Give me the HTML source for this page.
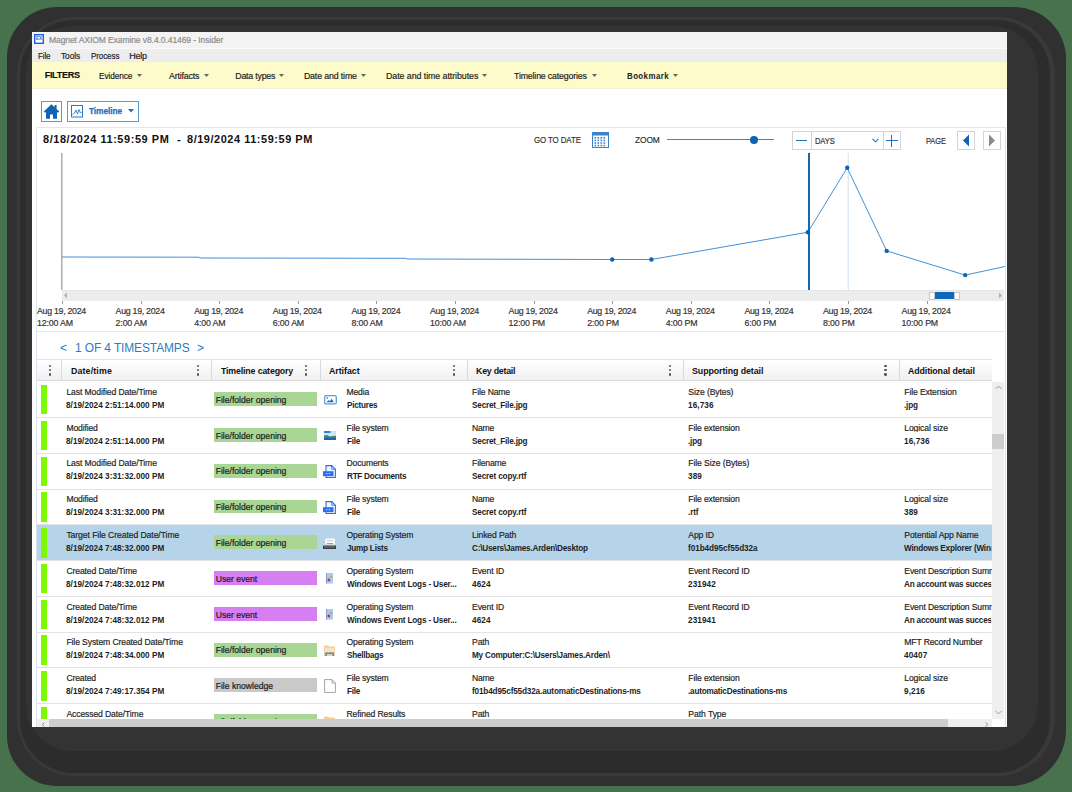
<!DOCTYPE html>
<html><head><meta charset="utf-8">
<style>
*{box-sizing:border-box;margin:0;padding:0}
html,body{width:1072px;height:792px;overflow:hidden;background:#48714d;font-family:"Liberation Sans",sans-serif;color:#1a1a1a}
.abs{position:absolute}
.t{position:absolute;white-space:pre;line-height:1}
.r{-webkit-text-stroke:0.18px currentColor}
#shadow{position:absolute;left:7px;top:7px;width:1059px;height:779px;border-radius:50px 52px 56px 50px;background:#303030}
#ring1{position:absolute;left:16.5px;top:16.5px;width:1038.5px;height:759.5px;border-radius:57px;background:#393939}
#ring2{position:absolute;left:20px;top:20px;width:1030px;height:753px;border-radius:54px;background:#2c2c2c}
#ring3{position:absolute;left:26px;top:26px;width:1012px;height:725px;border-radius:46px;background:#333}
</style></head>
<body>
<div id="shadow"></div><div id="ring1"></div><div id="ring2"></div><div id="ring3"></div>
<div style="position:absolute;left:32px;top:32px;width:975px;height:695px;overflow:hidden"><div style="position:absolute;left:-32px;top:-32px;width:1072px;height:792px">
<div class="abs" style="left:32px;top:32px;width:975px;height:695px;background:#fff;"></div>
<div class="abs" style="left:32px;top:32px;width:975px;height:16px;background:#f3f3f3;"></div>
<div class="abs" style="left:32px;top:48px;width:975px;height:14px;background:#ededed;"></div>
<div class="abs" style="left:32px;top:47.5px;width:975px;height:1px;background:#fafafa;"></div>
<svg class="abs" style="left:34px;top:34px" width="10" height="10" viewBox="0 0 10 10"><rect x="0.7" y="0.7" width="8.6" height="8.6" fill="#fff" stroke="#1a5fe0" stroke-width="1.4"/><text x="5" y="5.8" font-size="4.6" font-family="Liberation Sans" font-weight="700" text-anchor="middle" fill="#1a5fe0">EX</text></svg>
<div class="t r" style="left:48.70px;top:35.58px;font-size:9px;color:#8a8a8a;letter-spacing:-0.100px;transform:scaleX(0.948);transform-origin:0 0;">Magnet AXIOM Examine v8.4.0.41469 - Insider</div>
<div class="t r" style="left:38.40px;top:51.88px;font-size:9px;color:#222;letter-spacing:-0.100px;transform:scaleX(0.88);transform-origin:0 0;">File</div>
<div class="t r" style="left:61.30px;top:51.88px;font-size:9px;color:#222;letter-spacing:-0.100px;transform:scaleX(0.927);transform-origin:0 0;">Tools</div>
<div class="t r" style="left:90.60px;top:51.88px;font-size:9px;color:#222;letter-spacing:-0.100px;transform:scaleX(0.89);transform-origin:0 0;">Process</div>
<div class="t r" style="left:129.30px;top:51.88px;font-size:9px;color:#222;letter-spacing:-0.270px;">Help</div>
<div class="abs" style="left:32px;top:62px;width:975px;height:26px;background:#fdfbca;"></div>
<div class="abs" style="left:32px;top:88px;width:975px;height:1px;background:#f4f1d8;"></div>
<div class="t" style="left:44.70px;top:71.40px;font-size:9.1px;font-weight:700;color:#111;letter-spacing:-0.324px;transform:scaleX(1.0);transform-origin:0 0;-webkit-text-stroke:0.15px #111;">FILTERS</div>
<div class="t r" style="left:99.00px;top:72.15px;font-size:8.8px;color:#222;letter-spacing:-0.100px;transform:scaleX(0.938);transform-origin:0 0;">Evidence</div>
<svg class="abs" style="left:137.4px;top:73.9px" width="5" height="3" viewBox="0 0 5 3"><path d="M0 0H5L2.5 3Z" fill="#666"/></svg>
<div class="t r" style="left:169.00px;top:72.15px;font-size:8.8px;color:#222;letter-spacing:-0.161px;">Artifacts</div>
<svg class="abs" style="left:203.7px;top:73.9px" width="5" height="3" viewBox="0 0 5 3"><path d="M0 0H5L2.5 3Z" fill="#666"/></svg>
<div class="t r" style="left:235.30px;top:72.15px;font-size:8.8px;color:#222;letter-spacing:-0.219px;">Data types</div>
<svg class="abs" style="left:279.3px;top:73.9px" width="5" height="3" viewBox="0 0 5 3"><path d="M0 0H5L2.5 3Z" fill="#666"/></svg>
<div class="t r" style="left:303.90px;top:72.15px;font-size:8.8px;color:#222;letter-spacing:-0.141px;">Date and time</div>
<svg class="abs" style="left:361.3px;top:73.9px" width="5" height="3" viewBox="0 0 5 3"><path d="M0 0H5L2.5 3Z" fill="#666"/></svg>
<div class="t r" style="left:386.00px;top:72.15px;font-size:8.8px;color:#222;letter-spacing:-0.045px;">Date and time attributes</div>
<svg class="abs" style="left:482.4px;top:73.9px" width="5" height="3" viewBox="0 0 5 3"><path d="M0 0H5L2.5 3Z" fill="#666"/></svg>
<div class="t r" style="left:514.00px;top:72.15px;font-size:8.8px;color:#222;letter-spacing:-0.165px;">Timeline categories</div>
<svg class="abs" style="left:591.7px;top:73.9px" width="5" height="3" viewBox="0 0 5 3"><path d="M0 0H5L2.5 3Z" fill="#666"/></svg>
<div class="t" style="left:627.00px;top:72.15px;font-size:8.8px;font-weight:700;color:#222;letter-spacing:0.455px;transform:scaleX(0.9);transform-origin:0 0;">Bookmark</div>
<svg class="abs" style="left:673px;top:73.9px" width="5" height="3" viewBox="0 0 5 3"><path d="M0 0H5L2.5 3Z" fill="#666"/></svg>
<div class="abs" style="left:41px;top:101px;width:21px;height:21px;border:1px solid #5b9bd5;background:#fff"></div>
<svg class="abs" style="left:43px;top:103px" width="17" height="17" viewBox="0 0 17 17"><path d="M8.5 1.2L0.8 8.6L2 9.8L3 8.9V15.8H7V11.6H10V15.8H14V8.9L15 9.8L16.2 8.6L13.6 6.1V2H11.6V4.2Z" fill="#0e63b5"/></svg>
<div class="abs" style="left:67px;top:101px;width:72px;height:21px;border:1px solid #5b9bd5;background:#fff"></div>
<svg class="abs" style="left:71px;top:105px" width="12" height="13" viewBox="0 0 12 13"><rect x="0.5" y="0.5" width="11" height="11.5" fill="none" stroke="#2a78c8" stroke-width="1"/><path d="M1.5 9.5L3.5 8L5 5L6.5 9L8 4.5L9.5 8L10.5 7" fill="none" stroke="#2a78c8" stroke-width="0.9"/></svg>
<div class="t" style="left:89.30px;top:105.87px;font-size:9.6px;font-weight:700;color:#1b6ec2;letter-spacing:-0.100px;transform:scaleX(0.872);transform-origin:0 0;-webkit-text-stroke:0.25px #1b6ec2;">Timeline</div>
<svg class="abs" style="left:128.3px;top:108.8px" width="6" height="4" viewBox="0 0 6 4"><path d="M0 0H6L3 3.6Z" fill="#1b6ec2"/></svg>
<div class="abs" style="left:35.5px;top:127px;width:969.5px;height:1px;background:#e3e8ee;"></div>
<div class="abs" style="left:35.5px;top:127px;width:1px;height:204px;background:#e3e8ee;"></div>
<div class="t" style="left:43.10px;top:133.67px;font-size:11.5px;font-weight:700;color:#111;letter-spacing:0.611px;transform:scaleX(0.95);transform-origin:0 0;">8/18/2024 11:59:59 PM</div>
<div class="t" style="left:177.00px;top:133.67px;font-size:11.5px;font-weight:700;color:#111;">-</div>
<div class="t" style="left:187.00px;top:133.67px;font-size:11.5px;font-weight:700;color:#111;letter-spacing:0.585px;transform:scaleX(0.95);transform-origin:0 0;">8/19/2024 11:59:59 PM</div>
<div class="t r" style="left:534.00px;top:136.14px;font-size:8.7px;color:#333;letter-spacing:-0.100px;transform:scaleX(0.907);transform-origin:0 0;">GO TO DATE</div>
<svg class="abs" style="left:592px;top:132px" width="17" height="16" viewBox="0 0 17 16"><rect x="0.5" y="0.5" width="16" height="15" fill="#fff" stroke="#3b82c9"/><rect x="0.5" y="0.5" width="16" height="3" fill="#3b82c9"/><rect x="2.5" y="5.0" width="1.6" height="1.6" fill="#3b82c9"/><rect x="5.5" y="5.0" width="1.6" height="1.6" fill="#3b82c9"/><rect x="8.5" y="5.0" width="1.6" height="1.6" fill="#3b82c9"/><rect x="11.5" y="5.0" width="1.6" height="1.6" fill="#3b82c9"/><rect x="2.5" y="7.6" width="1.6" height="1.6" fill="#3b82c9"/><rect x="5.5" y="7.6" width="1.6" height="1.6" fill="#3b82c9"/><rect x="8.5" y="7.6" width="1.6" height="1.6" fill="#3b82c9"/><rect x="11.5" y="7.6" width="1.6" height="1.6" fill="#3b82c9"/><rect x="2.5" y="10.2" width="1.6" height="1.6" fill="#3b82c9"/><rect x="5.5" y="10.2" width="1.6" height="1.6" fill="#3b82c9"/><rect x="8.5" y="10.2" width="1.6" height="1.6" fill="#3b82c9"/><rect x="11.5" y="10.2" width="1.6" height="1.6" fill="#3b82c9"/><rect x="2.5" y="12.8" width="1.6" height="1.6" fill="#3b82c9"/><rect x="5.5" y="12.8" width="1.6" height="1.6" fill="#3b82c9"/><rect x="8.5" y="12.8" width="1.6" height="1.6" fill="#3b82c9"/><rect x="11.5" y="12.8" width="1.6" height="1.6" fill="#3b82c9"/></svg>
<div class="t r" style="left:634.50px;top:136.14px;font-size:8.7px;color:#333;letter-spacing:-0.100px;transform:scaleX(0.961);transform-origin:0 0;">ZOOM</div>
<div class="abs" style="left:667px;top:139px;width:107px;height:1.3px;background:#777;"></div>
<div class="abs" style="left:750px;top:135.5px;width:8px;height:8px;border-radius:50%;background:#0e63b5"></div>
<div class="abs" style="left:792px;top:131px;width:109px;height:19px;border:1px solid #d4d4d4;background:#fff"></div>
<div class="abs" style="left:810.5px;top:131px;width:1px;height:19px;background:#d4d4d4;"></div>
<div class="abs" style="left:882.5px;top:131px;width:1px;height:19px;background:#d4d4d4;"></div>
<div class="abs" style="left:796px;top:140px;width:11px;height:1.3px;background:#1b6ec2;"></div>
<div class="abs" style="left:885.5px;top:140px;width:12px;height:1.3px;background:#1b6ec2;"></div>
<div class="abs" style="left:891px;top:134.5px;width:1.3px;height:12px;background:#1b6ec2;"></div>
<div class="t r" style="left:814.80px;top:136.64px;font-size:8.7px;color:#333;letter-spacing:-0.100px;transform:scaleX(0.87);transform-origin:0 0;">DAYS</div>
<svg class="abs" style="left:872px;top:138px" width="7" height="5" viewBox="0 0 7 5"><path d="M0.5 0.8L3.5 3.8L6.5 0.8" fill="none" stroke="#2a6fb8" stroke-width="1.1"/></svg>
<div class="t r" style="left:926.00px;top:136.64px;font-size:8.7px;color:#333;letter-spacing:-0.100px;transform:scaleX(0.857);transform-origin:0 0;">PAGE</div>
<div class="abs" style="left:957px;top:131px;width:18px;height:19px;border:1px solid #d4d4d4;background:#fff"></div>
<svg class="abs" style="left:962px;top:134px" width="8" height="13" viewBox="0 0 8 13"><path d="M7 0.5V12.5L1 6.5Z" fill="#0e63b5"/></svg>
<div class="abs" style="left:983px;top:131px;width:18px;height:19px;border:1px solid #d4d4d4;background:#fff"></div>
<svg class="abs" style="left:988px;top:134px" width="8" height="13" viewBox="0 0 8 13"><path d="M1 0.5V12.5L7 6.5Z" fill="#8a8a8a"/></svg>
<svg class="abs" style="left:0;top:0" width="1072" height="792" viewBox="0 0 1072 792"><rect x="61.2" y="153" width="1.2" height="137" fill="#9a9a9a"/><rect x="847.7" y="153" width="1" height="137" fill="#cfe0f0"/><polyline points="62,257 199,257.2 200,258 406,258.3 407,259 612.2,259.5 651.4,259.5 807.9,232.2 847.2,167.8 886.7,250.9 965.2,275.1 1004.9,266.5" fill="none" stroke="#4391d6" stroke-width="1"/><rect x="808" y="153" width="2" height="137" fill="#1767b0"/><circle cx="612.2" cy="259.5" r="2.2" fill="#0e63b5"/><circle cx="651.4" cy="259.5" r="2.2" fill="#0e63b5"/><circle cx="807.9" cy="232.2" r="2.2" fill="#0e63b5"/><circle cx="847.2" cy="167.8" r="2.2" fill="#0e63b5"/><circle cx="886.7" cy="250.9" r="2.2" fill="#0e63b5"/><circle cx="965.2" cy="275.1" r="2.2" fill="#0e63b5"/></svg>
<div class="abs" style="left:61.7px;top:290px;width:942.5px;height:10.5px;background:#ececec;border-top:1px solid #e0e6ec"></div>
<svg class="abs" style="left:63px;top:292px" width="5" height="7" viewBox="0 0 5 7"><path d="M4 0.5V6.5L1 3.5Z" fill="#b0b0b0"/></svg>
<svg class="abs" style="left:998px;top:292px" width="5" height="7" viewBox="0 0 5 7"><path d="M1 0.5V6.5L4 3.5Z" fill="#b0b0b0"/></svg>
<div class="abs" style="left:929px;top:291.5px;width:6px;height:8px;border:1px solid #c8c8c8;background:#fff"></div>
<div class="abs" style="left:934.8px;top:292px;width:19.2px;height:7px;background:#0e6ab8;"></div>
<div class="abs" style="left:954px;top:291.5px;width:6px;height:8px;border:1px solid #c8c8c8;background:#fff"></div>
<div class="abs" style="left:62.0px;top:301px;width:1px;height:3px;background:#999;"></div>
<div class="t r" style="left:37.00px;top:307.05px;font-size:8.8px;color:#333;letter-spacing:-0.287px;">Aug 19, 2024</div>
<div class="t r" style="left:37.00px;top:318.85px;font-size:8.8px;color:#333;letter-spacing:-0.150px;">12:00 AM</div>
<div class="abs" style="left:140.6px;top:301px;width:1px;height:3px;background:#999;"></div>
<div class="t r" style="left:115.60px;top:307.05px;font-size:8.8px;color:#333;letter-spacing:-0.287px;">Aug 19, 2024</div>
<div class="t r" style="left:115.60px;top:318.85px;font-size:8.8px;color:#333;letter-spacing:-0.150px;">2:00 AM</div>
<div class="abs" style="left:219.2px;top:301px;width:1px;height:3px;background:#999;"></div>
<div class="t r" style="left:194.20px;top:307.05px;font-size:8.8px;color:#333;letter-spacing:-0.287px;">Aug 19, 2024</div>
<div class="t r" style="left:194.20px;top:318.85px;font-size:8.8px;color:#333;letter-spacing:-0.150px;">4:00 AM</div>
<div class="abs" style="left:297.79999999999995px;top:301px;width:1px;height:3px;background:#999;"></div>
<div class="t r" style="left:272.80px;top:307.05px;font-size:8.8px;color:#333;letter-spacing:-0.287px;">Aug 19, 2024</div>
<div class="t r" style="left:272.80px;top:318.85px;font-size:8.8px;color:#333;letter-spacing:-0.150px;">6:00 AM</div>
<div class="abs" style="left:376.4px;top:301px;width:1px;height:3px;background:#999;"></div>
<div class="t r" style="left:351.40px;top:307.05px;font-size:8.8px;color:#333;letter-spacing:-0.287px;">Aug 19, 2024</div>
<div class="t r" style="left:351.40px;top:318.85px;font-size:8.8px;color:#333;letter-spacing:-0.150px;">8:00 AM</div>
<div class="abs" style="left:455.0px;top:301px;width:1px;height:3px;background:#999;"></div>
<div class="t r" style="left:430.00px;top:307.05px;font-size:8.8px;color:#333;letter-spacing:-0.287px;">Aug 19, 2024</div>
<div class="t r" style="left:430.00px;top:318.85px;font-size:8.8px;color:#333;letter-spacing:-0.150px;">10:00 AM</div>
<div class="abs" style="left:533.5999999999999px;top:301px;width:1px;height:3px;background:#999;"></div>
<div class="t r" style="left:508.60px;top:307.05px;font-size:8.8px;color:#333;letter-spacing:-0.287px;">Aug 19, 2024</div>
<div class="t r" style="left:508.60px;top:318.85px;font-size:8.8px;color:#333;letter-spacing:-0.150px;">12:00 PM</div>
<div class="abs" style="left:612.1999999999999px;top:301px;width:1px;height:3px;background:#999;"></div>
<div class="t r" style="left:587.20px;top:307.05px;font-size:8.8px;color:#333;letter-spacing:-0.287px;">Aug 19, 2024</div>
<div class="t r" style="left:587.20px;top:318.85px;font-size:8.8px;color:#333;letter-spacing:-0.150px;">2:00 PM</div>
<div class="abs" style="left:690.8px;top:301px;width:1px;height:3px;background:#999;"></div>
<div class="t r" style="left:665.80px;top:307.05px;font-size:8.8px;color:#333;letter-spacing:-0.287px;">Aug 19, 2024</div>
<div class="t r" style="left:665.80px;top:318.85px;font-size:8.8px;color:#333;letter-spacing:-0.150px;">4:00 PM</div>
<div class="abs" style="left:769.4px;top:301px;width:1px;height:3px;background:#999;"></div>
<div class="t r" style="left:744.40px;top:307.05px;font-size:8.8px;color:#333;letter-spacing:-0.287px;">Aug 19, 2024</div>
<div class="t r" style="left:744.40px;top:318.85px;font-size:8.8px;color:#333;letter-spacing:-0.150px;">6:00 PM</div>
<div class="abs" style="left:848.0px;top:301px;width:1px;height:3px;background:#999;"></div>
<div class="t r" style="left:823.00px;top:307.05px;font-size:8.8px;color:#333;letter-spacing:-0.287px;">Aug 19, 2024</div>
<div class="t r" style="left:823.00px;top:318.85px;font-size:8.8px;color:#333;letter-spacing:-0.150px;">8:00 PM</div>
<div class="abs" style="left:926.5999999999999px;top:301px;width:1px;height:3px;background:#999;"></div>
<div class="t r" style="left:901.60px;top:307.05px;font-size:8.8px;color:#333;letter-spacing:-0.287px;">Aug 19, 2024</div>
<div class="t r" style="left:901.60px;top:318.85px;font-size:8.8px;color:#333;letter-spacing:-0.150px;">10:00 PM</div>
<div class="abs" style="left:36px;top:330.5px;width:968.5px;height:1px;background:#e3e8ee;"></div>
<div class="t r" style="left:59.90px;top:341.84px;font-size:12px;color:#2b7cc4;-webkit-text-stroke:0;">&lt;</div>
<div class="t r" style="left:74.80px;top:341.59px;font-size:12.3px;color:#2b7cc4;letter-spacing:-0.100px;transform:scaleX(0.97);transform-origin:0 0;-webkit-text-stroke:0;">1 OF 4 TIMESTAMPS</div>
<div class="t r" style="left:197.00px;top:341.84px;font-size:12px;color:#2b7cc4;-webkit-text-stroke:0;">&gt;</div>
<div class="abs" style="left:37px;top:359.2px;width:955px;height:22.3px;background:linear-gradient(#ffffff,#f0f0f0);border-top:1px solid #e4e4e4;border-bottom:1px solid #dcdcdc"></div>
<div class="abs" style="left:61.3px;top:360px;width:1px;height:21px;background:#dadada;"></div>
<div class="abs" style="left:211.2px;top:360px;width:1px;height:21px;background:#dadada;"></div>
<div class="abs" style="left:319.6px;top:360px;width:1px;height:21px;background:#dadada;"></div>
<div class="abs" style="left:466.6px;top:360px;width:1px;height:21px;background:#dadada;"></div>
<div class="abs" style="left:682.5px;top:360px;width:1px;height:21px;background:#dadada;"></div>
<div class="abs" style="left:898.6px;top:360px;width:1px;height:21px;background:#dadada;"></div>
<div class="abs" style="left:48.95px;top:364.55px;width:2.3px;height:2.3px;border-radius:50%;background:#555"></div>
<div class="abs" style="left:48.95px;top:368.95px;width:2.3px;height:2.3px;border-radius:50%;background:#555"></div>
<div class="abs" style="left:48.95px;top:373.35px;width:2.3px;height:2.3px;border-radius:50%;background:#555"></div>
<div class="abs" style="left:197.15px;top:364.55px;width:2.3px;height:2.3px;border-radius:50%;background:#555"></div>
<div class="abs" style="left:197.15px;top:368.95px;width:2.3px;height:2.3px;border-radius:50%;background:#555"></div>
<div class="abs" style="left:197.15px;top:373.35px;width:2.3px;height:2.3px;border-radius:50%;background:#555"></div>
<div class="abs" style="left:305.15px;top:364.55px;width:2.3px;height:2.3px;border-radius:50%;background:#555"></div>
<div class="abs" style="left:305.15px;top:368.95px;width:2.3px;height:2.3px;border-radius:50%;background:#555"></div>
<div class="abs" style="left:305.15px;top:373.35px;width:2.3px;height:2.3px;border-radius:50%;background:#555"></div>
<div class="abs" style="left:452.55px;top:364.55px;width:2.3px;height:2.3px;border-radius:50%;background:#555"></div>
<div class="abs" style="left:452.55px;top:368.95px;width:2.3px;height:2.3px;border-radius:50%;background:#555"></div>
<div class="abs" style="left:452.55px;top:373.35px;width:2.3px;height:2.3px;border-radius:50%;background:#555"></div>
<div class="abs" style="left:668.85px;top:364.55px;width:2.3px;height:2.3px;border-radius:50%;background:#555"></div>
<div class="abs" style="left:668.85px;top:368.95px;width:2.3px;height:2.3px;border-radius:50%;background:#555"></div>
<div class="abs" style="left:668.85px;top:373.35px;width:2.3px;height:2.3px;border-radius:50%;background:#555"></div>
<div class="abs" style="left:884.35px;top:364.55px;width:2.3px;height:2.3px;border-radius:50%;background:#555"></div>
<div class="abs" style="left:884.35px;top:368.95px;width:2.3px;height:2.3px;border-radius:50%;background:#555"></div>
<div class="abs" style="left:884.35px;top:373.35px;width:2.3px;height:2.3px;border-radius:50%;background:#555"></div>
<div class="t" style="left:70.70px;top:366.30px;font-size:9.8px;font-weight:700;color:#111;letter-spacing:0.152px;transform:scaleX(0.9);transform-origin:0 0;">Date/time</div>
<div class="t" style="left:220.90px;top:366.30px;font-size:9.8px;font-weight:700;color:#111;letter-spacing:-0.176px;transform:scaleX(0.9);transform-origin:0 0;">Timeline category</div>
<div class="t" style="left:328.70px;top:366.30px;font-size:9.8px;font-weight:700;color:#111;letter-spacing:-0.044px;transform:scaleX(0.9);transform-origin:0 0;">Artifact</div>
<div class="t" style="left:476.40px;top:366.30px;font-size:9.8px;font-weight:700;color:#111;letter-spacing:-0.268px;transform:scaleX(0.9);transform-origin:0 0;">Key detail</div>
<div class="t" style="left:691.70px;top:366.30px;font-size:9.8px;font-weight:700;color:#111;letter-spacing:-0.078px;transform:scaleX(0.9);transform-origin:0 0;">Supporting detail</div>
<div class="t" style="left:908.30px;top:366.30px;font-size:9.8px;font-weight:700;color:#111;letter-spacing:-0.118px;transform:scaleX(0.9);transform-origin:0 0;">Additional detail</div>
<div class="abs" style="left:37px;top:416.97999999999996px;width:955px;height:1px;background:#e3e3e3;"></div>
<div class="abs" style="left:40.5px;top:385.0px;width:6.8px;height:29.4px;background:#7cfa00;"></div>
<div class="t r" style="left:66.40px;top:387.92px;font-size:8.6px;color:#1e1e1e;letter-spacing:-0.103px;">Last Modified Date/Time</div>
<div class="t" style="left:66.40px;top:400.90px;font-size:9.1px;font-weight:700;color:#1e1e1e;letter-spacing:0.044px;transform:scaleX(0.9);transform-origin:0 0;">8/19/2024 2:51:14.000 PM</div>
<div class="abs" style="left:213.9px;top:392.2px;width:102.8px;height:13.9px;background:#a9d595;"></div>
<div class="t r" style="left:215.70px;top:395.82px;font-size:8.6px;">File/folder opening</div>
<svg class="abs" style="left:323.5px;top:395.00px" width="13" height="9.5" viewBox="0 0 13 9.5"><rect x="0.7" y="0.7" width="11.6" height="8.1" rx="1.3" fill="#fff" stroke="#5a9ed8" stroke-width="1.3"/><path d="M2.5 7.3L4.5 5L5.8 6.2L7.5 3.8L10 7.3Z" fill="#1e6fc4"/><ellipse cx="3.3" cy="3" rx="0.9" ry="0.7" fill="#1e6fc4"/></svg>
<div class="t r" style="left:346.50px;top:387.92px;font-size:8.6px;color:#1e1e1e;letter-spacing:-0.176px;">Media</div>
<div class="t" style="left:346.50px;top:400.90px;font-size:9.1px;font-weight:700;color:#1e1e1e;letter-spacing:-0.282px;transform:scaleX(0.9);transform-origin:0 0;">Pictures</div>
<div class="t r" style="left:472.10px;top:387.92px;font-size:8.6px;color:#1e1e1e;letter-spacing:-0.138px;">File Name</div>
<div class="t" style="left:472.10px;top:400.90px;font-size:9.1px;font-weight:700;color:#1e1e1e;letter-spacing:-0.214px;transform:scaleX(0.9);transform-origin:0 0;">Secret_File.jpg</div>
<div class="t r" style="left:688.30px;top:387.92px;font-size:8.6px;color:#1e1e1e;letter-spacing:-0.104px;">Size (Bytes)</div>
<div class="t" style="left:688.30px;top:400.90px;font-size:9.1px;font-weight:700;color:#1e1e1e;letter-spacing:0.103px;transform:scaleX(0.9);transform-origin:0 0;">16,736</div>
<div class="t r" style="width:87.7px;overflow:hidden;left:904.30px;top:387.92px;font-size:8.6px;color:#1e1e1e;letter-spacing:-0.119px;">File Extension</div>
<div class="t" style="width:97.4px;overflow:hidden;left:904.30px;top:400.90px;font-size:9.1px;font-weight:700;color:#1e1e1e;letter-spacing:-0.234px;transform:scaleX(0.9);transform-origin:0 0;">.jpg</div>
<div class="abs" style="left:37px;top:452.75999999999993px;width:955px;height:1px;background:#e3e3e3;"></div>
<div class="abs" style="left:40.5px;top:420.78px;width:6.8px;height:29.4px;background:#7cfa00;"></div>
<div class="t r" style="left:66.40px;top:423.70px;font-size:8.6px;color:#1e1e1e;letter-spacing:-0.139px;">Modified</div>
<div class="t" style="left:66.40px;top:436.68px;font-size:9.1px;font-weight:700;color:#1e1e1e;letter-spacing:0.044px;transform:scaleX(0.9);transform-origin:0 0;">8/19/2024 2:51:14.000 PM</div>
<div class="abs" style="left:213.9px;top:427.97999999999996px;width:102.8px;height:13.9px;background:#a9d595;"></div>
<div class="t r" style="left:215.70px;top:431.60px;font-size:8.6px;">File/folder opening</div>
<svg class="abs" style="left:323.8px;top:430.78px" width="12" height="9.3" viewBox="0 0 12 9.3"><rect x="0" y="0" width="12" height="9.3" fill="#cfe6f8"/><rect x="0" y="0" width="6.5" height="2" fill="#2f86e0"/><path d="M0 4.5L3 4L6 5.5L9 5L12 4.8V9.3H0Z" fill="#3f8a6a"/><rect x="0" y="6.8" width="12" height="2.5" fill="#2a5fa8"/></svg>
<div class="t r" style="left:346.50px;top:423.70px;font-size:8.6px;color:#1e1e1e;letter-spacing:-0.123px;">File system</div>
<div class="t" style="left:346.50px;top:436.68px;font-size:9.1px;font-weight:700;color:#1e1e1e;letter-spacing:-0.287px;transform:scaleX(0.9);transform-origin:0 0;">File</div>
<div class="t r" style="left:472.10px;top:423.70px;font-size:8.6px;color:#1e1e1e;letter-spacing:-0.229px;">Name</div>
<div class="t" style="left:472.10px;top:436.68px;font-size:9.1px;font-weight:700;color:#1e1e1e;letter-spacing:-0.214px;transform:scaleX(0.9);transform-origin:0 0;">Secret_File.jpg</div>
<div class="t r" style="left:688.30px;top:423.70px;font-size:8.6px;color:#1e1e1e;letter-spacing:-0.117px;">File extension</div>
<div class="t" style="left:688.30px;top:436.68px;font-size:9.1px;font-weight:700;color:#1e1e1e;letter-spacing:-0.234px;transform:scaleX(0.9);transform-origin:0 0;">.jpg</div>
<div class="t r" style="width:87.7px;overflow:hidden;left:904.30px;top:423.70px;font-size:8.6px;color:#1e1e1e;letter-spacing:-0.116px;">Logical size</div>
<div class="t" style="width:97.4px;overflow:hidden;left:904.30px;top:436.68px;font-size:9.1px;font-weight:700;color:#1e1e1e;letter-spacing:0.103px;transform:scaleX(0.9);transform-origin:0 0;">16,736</div>
<div class="abs" style="left:37px;top:488.54px;width:955px;height:1px;background:#e3e3e3;"></div>
<div class="abs" style="left:40.5px;top:456.56px;width:6.8px;height:29.4px;background:#7cfa00;"></div>
<div class="t r" style="left:66.40px;top:459.48px;font-size:8.6px;color:#1e1e1e;letter-spacing:-0.103px;">Last Modified Date/Time</div>
<div class="t" style="left:66.40px;top:472.46px;font-size:9.1px;font-weight:700;color:#1e1e1e;letter-spacing:0.044px;transform:scaleX(0.9);transform-origin:0 0;">8/19/2024 3:31:32.000 PM</div>
<div class="abs" style="left:213.9px;top:463.76px;width:102.8px;height:13.9px;background:#a9d595;"></div>
<div class="t r" style="left:215.70px;top:467.38px;font-size:8.6px;">File/folder opening</div>
<svg class="abs" style="left:323.2px;top:464.76px" width="13" height="13.2" viewBox="0 0 13 13.2"><path d="M3 0.6H8.8L12.4 4.2V12.6H3Z" fill="#f4f8fe" stroke="#2a6ef0" stroke-width="1.1"/><path d="M8.8 0.6V4.2H12.4" fill="none" stroke="#2a6ef0" stroke-width="1"/><rect x="0" y="6.2" width="10.5" height="5" fill="#2b6ef2"/><rect x="3.2" y="8" width="1.2" height="1.2" fill="#cfe0ff"/><rect x="5.8" y="8" width="1.2" height="1.2" fill="#cfe0ff"/></svg>
<div class="t r" style="left:346.50px;top:459.48px;font-size:8.6px;color:#1e1e1e;letter-spacing:-0.163px;">Documents</div>
<div class="t" style="left:346.50px;top:472.46px;font-size:9.1px;font-weight:700;color:#1e1e1e;letter-spacing:-0.304px;transform:scaleX(0.9);transform-origin:0 0;">RTF Documents</div>
<div class="t r" style="left:472.10px;top:459.48px;font-size:8.6px;color:#1e1e1e;letter-spacing:-0.152px;">Filename</div>
<div class="t" style="left:472.10px;top:472.46px;font-size:9.1px;font-weight:700;color:#1e1e1e;letter-spacing:-0.175px;transform:scaleX(0.9);transform-origin:0 0;">Secret copy.rtf</div>
<div class="t r" style="left:688.30px;top:459.48px;font-size:8.6px;color:#1e1e1e;letter-spacing:-0.098px;">File Size (Bytes)</div>
<div class="t" style="left:688.30px;top:472.46px;font-size:9.1px;font-weight:700;color:#1e1e1e;letter-spacing:0.141px;transform:scaleX(0.9);transform-origin:0 0;">389</div>
<div class="abs" style="left:37px;top:524.32px;width:955px;height:1px;background:#e3e3e3;"></div>
<div class="abs" style="left:40.5px;top:492.34000000000003px;width:6.8px;height:29.4px;background:#7cfa00;"></div>
<div class="t r" style="left:66.40px;top:495.26px;font-size:8.6px;color:#1e1e1e;letter-spacing:-0.139px;">Modified</div>
<div class="t" style="left:66.40px;top:508.24px;font-size:9.1px;font-weight:700;color:#1e1e1e;letter-spacing:0.044px;transform:scaleX(0.9);transform-origin:0 0;">8/19/2024 3:31:32.000 PM</div>
<div class="abs" style="left:213.9px;top:499.54px;width:102.8px;height:13.9px;background:#a9d595;"></div>
<div class="t r" style="left:215.70px;top:503.16px;font-size:8.6px;">File/folder opening</div>
<svg class="abs" style="left:323.2px;top:500.54px" width="13" height="13.2" viewBox="0 0 13 13.2"><path d="M3 0.6H8.8L12.4 4.2V12.6H3Z" fill="#f4f8fe" stroke="#2a6ef0" stroke-width="1.1"/><path d="M8.8 0.6V4.2H12.4" fill="none" stroke="#2a6ef0" stroke-width="1"/><rect x="0" y="6.2" width="10.5" height="5" fill="#2b6ef2"/><rect x="3.2" y="8" width="1.2" height="1.2" fill="#cfe0ff"/><rect x="5.8" y="8" width="1.2" height="1.2" fill="#cfe0ff"/></svg>
<div class="t r" style="left:346.50px;top:495.26px;font-size:8.6px;color:#1e1e1e;letter-spacing:-0.123px;">File system</div>
<div class="t" style="left:346.50px;top:508.24px;font-size:9.1px;font-weight:700;color:#1e1e1e;letter-spacing:-0.287px;transform:scaleX(0.9);transform-origin:0 0;">File</div>
<div class="t r" style="left:472.10px;top:495.26px;font-size:8.6px;color:#1e1e1e;letter-spacing:-0.229px;">Name</div>
<div class="t" style="left:472.10px;top:508.24px;font-size:9.1px;font-weight:700;color:#1e1e1e;letter-spacing:-0.175px;transform:scaleX(0.9);transform-origin:0 0;">Secret copy.rtf</div>
<div class="t r" style="left:688.30px;top:495.26px;font-size:8.6px;color:#1e1e1e;letter-spacing:-0.117px;">File extension</div>
<div class="t" style="left:688.30px;top:508.24px;font-size:9.1px;font-weight:700;color:#1e1e1e;letter-spacing:-0.160px;transform:scaleX(0.9);transform-origin:0 0;">.rtf</div>
<div class="t r" style="width:87.7px;overflow:hidden;left:904.30px;top:495.26px;font-size:8.6px;color:#1e1e1e;letter-spacing:-0.116px;">Logical size</div>
<div class="t" style="width:97.4px;overflow:hidden;left:904.30px;top:508.24px;font-size:9.1px;font-weight:700;color:#1e1e1e;letter-spacing:0.141px;transform:scaleX(0.9);transform-origin:0 0;">389</div>
<div class="abs" style="left:37px;top:525.02px;width:955px;height:35.58px;background:#b5d3e9;"></div>
<div class="abs" style="left:37px;top:560.1px;width:955px;height:1px;background:#e3e3e3;"></div>
<div class="abs" style="left:40.5px;top:528.12px;width:6.8px;height:29.4px;background:#7cfa00;"></div>
<div class="t r" style="left:66.40px;top:531.04px;font-size:8.6px;color:#1e1e1e;letter-spacing:-0.069px;">Target File Created Date/Time</div>
<div class="t" style="left:66.40px;top:544.02px;font-size:9.1px;font-weight:700;color:#1e1e1e;letter-spacing:0.044px;transform:scaleX(0.9);transform-origin:0 0;">8/19/2024 7:48:32.000 PM</div>
<div class="abs" style="left:213.9px;top:535.32px;width:102.8px;height:13.9px;background:#a9d595;"></div>
<div class="t r" style="left:215.70px;top:538.94px;font-size:8.6px;">File/folder opening</div>
<svg class="abs" style="left:323px;top:538.12px" width="13.2" height="11.7" viewBox="0 0 13.2 11.7"><rect x="2" y="0.3" width="10" height="6.5" fill="#fbfbfb" stroke="#c9d6e2" stroke-width="0.5"/><rect x="4" y="2.2" width="6" height="1" fill="#c8c8c8"/><rect x="4" y="5.2" width="6" height="0.9" fill="#4d9be0"/><rect x="0" y="7.6" width="13.2" height="3.4" fill="#3a3a40"/><rect x="1" y="8.3" width="11" height="1.6" fill="#6a6a58"/></svg>
<div class="t r" style="left:346.50px;top:531.04px;font-size:8.6px;color:#1e1e1e;letter-spacing:-0.133px;">Operating System</div>
<div class="t" style="left:346.50px;top:544.02px;font-size:9.1px;font-weight:700;color:#1e1e1e;letter-spacing:-0.273px;transform:scaleX(0.9);transform-origin:0 0;">Jump Lists</div>
<div class="t r" style="left:472.10px;top:531.04px;font-size:8.6px;color:#1e1e1e;letter-spacing:-0.129px;">Linked Path</div>
<div class="t" style="left:472.10px;top:544.02px;font-size:9.1px;font-weight:700;color:#1e1e1e;letter-spacing:-0.240px;transform:scaleX(0.9);transform-origin:0 0;">C:\Users\James.Arden\Desktop</div>
<div class="t r" style="left:688.30px;top:531.04px;font-size:8.6px;color:#1e1e1e;letter-spacing:-0.143px;">App ID</div>
<div class="t" style="left:688.30px;top:544.02px;font-size:9.1px;font-weight:700;color:#1e1e1e;letter-spacing:-0.064px;transform:scaleX(0.9);transform-origin:0 0;">f01b4d95cf55d32a</div>
<div class="t r" style="width:87.7px;overflow:hidden;left:904.30px;top:531.04px;font-size:8.6px;color:#1e1e1e;letter-spacing:-0.099px;">Potential App Name</div>
<div class="t" style="width:97.4px;overflow:hidden;left:904.30px;top:544.02px;font-size:9.1px;font-weight:700;color:#1e1e1e;letter-spacing:-0.242px;transform:scaleX(0.9);transform-origin:0 0;">Windows Explorer (Windows)</div>
<div class="abs" style="left:37px;top:595.88px;width:955px;height:1px;background:#e3e3e3;"></div>
<div class="abs" style="left:40.5px;top:563.9px;width:6.8px;height:29.4px;background:#7cfa00;"></div>
<div class="t r" style="left:66.40px;top:566.82px;font-size:8.6px;color:#1e1e1e;letter-spacing:-0.107px;">Created Date/Time</div>
<div class="t" style="left:66.40px;top:579.80px;font-size:9.1px;font-weight:700;color:#1e1e1e;letter-spacing:0.044px;transform:scaleX(0.9);transform-origin:0 0;">8/19/2024 7:48:32.012 PM</div>
<div class="abs" style="left:213.9px;top:571.1px;width:102.8px;height:13.9px;background:#d77ef0;"></div>
<div class="t r" style="left:215.70px;top:574.72px;font-size:8.6px;">User event</div>
<svg class="abs" style="left:326px;top:573.20px" width="7.2" height="10.6" viewBox="0 0 7.2 10.6"><rect x="0" y="0" width="7.2" height="10.6" fill="#a9cbf0"/><rect x="0" y="0" width="1" height="10.6" fill="#7f9fd6"/><path d="M4.8 2.5L6.5 4L5.2 5.5L3.8 4Z" fill="#e0953a"/><path d="M2.5 5.2L4.5 7L3 8.8L1.2 7Z" fill="#b0304a"/></svg>
<div class="t r" style="left:346.50px;top:566.82px;font-size:8.6px;color:#1e1e1e;letter-spacing:-0.133px;">Operating System</div>
<div class="t" style="left:346.50px;top:579.80px;font-size:9.1px;font-weight:700;color:#1e1e1e;letter-spacing:-0.181px;transform:scaleX(0.9);transform-origin:0 0;">Windows Event Logs - User...</div>
<div class="t r" style="left:472.10px;top:566.82px;font-size:8.6px;color:#1e1e1e;letter-spacing:-0.131px;">Event ID</div>
<div class="t" style="left:472.10px;top:579.80px;font-size:9.1px;font-weight:700;color:#1e1e1e;letter-spacing:0.125px;transform:scaleX(0.9);transform-origin:0 0;">4624</div>
<div class="t r" style="left:688.30px;top:566.82px;font-size:8.6px;color:#1e1e1e;letter-spacing:-0.125px;">Event Record ID</div>
<div class="t" style="left:688.30px;top:579.80px;font-size:9.1px;font-weight:700;color:#1e1e1e;letter-spacing:0.113px;transform:scaleX(0.9);transform-origin:0 0;">231942</div>
<div class="t r" style="width:87.7px;overflow:hidden;left:904.30px;top:566.82px;font-size:8.6px;color:#1e1e1e;letter-spacing:-0.127px;">Event Description Summary</div>
<div class="t" style="width:97.4px;overflow:hidden;left:904.30px;top:579.80px;font-size:9.1px;font-weight:700;color:#1e1e1e;letter-spacing:-0.237px;transform:scaleX(0.9);transform-origin:0 0;">An account was successfully logged on</div>
<div class="abs" style="left:37px;top:631.6600000000001px;width:955px;height:1px;background:#e3e3e3;"></div>
<div class="abs" style="left:40.5px;top:599.6800000000001px;width:6.8px;height:29.4px;background:#7cfa00;"></div>
<div class="t r" style="left:66.40px;top:602.60px;font-size:8.6px;color:#1e1e1e;letter-spacing:-0.107px;">Created Date/Time</div>
<div class="t" style="left:66.40px;top:615.58px;font-size:9.1px;font-weight:700;color:#1e1e1e;letter-spacing:0.044px;transform:scaleX(0.9);transform-origin:0 0;">8/19/2024 7:48:32.012 PM</div>
<div class="abs" style="left:213.9px;top:606.8800000000001px;width:102.8px;height:13.9px;background:#d77ef0;"></div>
<div class="t r" style="left:215.70px;top:610.50px;font-size:8.6px;">User event</div>
<svg class="abs" style="left:326px;top:608.98px" width="7.2" height="10.6" viewBox="0 0 7.2 10.6"><rect x="0" y="0" width="7.2" height="10.6" fill="#a9cbf0"/><rect x="0" y="0" width="1" height="10.6" fill="#7f9fd6"/><path d="M4.8 2.5L6.5 4L5.2 5.5L3.8 4Z" fill="#e0953a"/><path d="M2.5 5.2L4.5 7L3 8.8L1.2 7Z" fill="#b0304a"/></svg>
<div class="t r" style="left:346.50px;top:602.60px;font-size:8.6px;color:#1e1e1e;letter-spacing:-0.133px;">Operating System</div>
<div class="t" style="left:346.50px;top:615.58px;font-size:9.1px;font-weight:700;color:#1e1e1e;letter-spacing:-0.181px;transform:scaleX(0.9);transform-origin:0 0;">Windows Event Logs - User...</div>
<div class="t r" style="left:472.10px;top:602.60px;font-size:8.6px;color:#1e1e1e;letter-spacing:-0.131px;">Event ID</div>
<div class="t" style="left:472.10px;top:615.58px;font-size:9.1px;font-weight:700;color:#1e1e1e;letter-spacing:0.125px;transform:scaleX(0.9);transform-origin:0 0;">4624</div>
<div class="t r" style="left:688.30px;top:602.60px;font-size:8.6px;color:#1e1e1e;letter-spacing:-0.125px;">Event Record ID</div>
<div class="t" style="left:688.30px;top:615.58px;font-size:9.1px;font-weight:700;color:#1e1e1e;letter-spacing:0.113px;transform:scaleX(0.9);transform-origin:0 0;">231941</div>
<div class="t r" style="width:87.7px;overflow:hidden;left:904.30px;top:602.60px;font-size:8.6px;color:#1e1e1e;letter-spacing:-0.127px;">Event Description Summary</div>
<div class="t" style="width:97.4px;overflow:hidden;left:904.30px;top:615.58px;font-size:9.1px;font-weight:700;color:#1e1e1e;letter-spacing:-0.237px;transform:scaleX(0.9);transform-origin:0 0;">An account was successfully logged on</div>
<div class="abs" style="left:37px;top:667.44px;width:955px;height:1px;background:#e3e3e3;"></div>
<div class="abs" style="left:40.5px;top:635.46px;width:6.8px;height:29.4px;background:#7cfa00;"></div>
<div class="t r" style="left:66.40px;top:638.38px;font-size:8.6px;color:#1e1e1e;letter-spacing:-0.107px;">File System Created Date/Time</div>
<div class="t" style="left:66.40px;top:651.36px;font-size:9.1px;font-weight:700;color:#1e1e1e;letter-spacing:0.044px;transform:scaleX(0.9);transform-origin:0 0;">8/19/2024 7:48:34.000 PM</div>
<div class="abs" style="left:213.9px;top:642.6600000000001px;width:102.8px;height:13.9px;background:#a9d595;"></div>
<div class="t r" style="left:215.70px;top:646.28px;font-size:8.6px;">File/folder opening</div>
<svg class="abs" style="left:324px;top:644.76px" width="11.2" height="11.2" viewBox="0 0 11.2 11.2"><path d="M0 0.5H4L5 1.6H11.2V11.2H0Z" fill="#f4cf9a"/><rect x="1" y="3" width="9" height="4" fill="#f9e2bf"/><path d="M1.2 11V8.5Q1.2 7.5 2.5 7.5H8.7Q10 7.5 10 8.5V11H8.5V9H2.7V11Z" fill="#3d8fe0"/></svg>
<div class="t r" style="left:346.50px;top:638.38px;font-size:8.6px;color:#1e1e1e;letter-spacing:-0.133px;">Operating System</div>
<div class="t" style="left:346.50px;top:651.36px;font-size:9.1px;font-weight:700;color:#1e1e1e;letter-spacing:-0.295px;transform:scaleX(0.9);transform-origin:0 0;">Shellbags</div>
<div class="t r" style="left:472.10px;top:638.38px;font-size:8.6px;color:#1e1e1e;letter-spacing:-0.177px;">Path</div>
<div class="t" style="left:472.10px;top:651.36px;font-size:9.1px;font-weight:700;color:#1e1e1e;letter-spacing:-0.233px;transform:scaleX(0.9);transform-origin:0 0;">My Computer:C:\Users\James.Arden\</div>
<div class="t r" style="width:87.7px;overflow:hidden;left:904.30px;top:638.38px;font-size:8.6px;color:#1e1e1e;letter-spacing:-0.133px;">MFT Record Number</div>
<div class="t" style="width:97.4px;overflow:hidden;left:904.30px;top:651.36px;font-size:9.1px;font-weight:700;color:#1e1e1e;letter-spacing:0.117px;transform:scaleX(0.9);transform-origin:0 0;">40407</div>
<div class="abs" style="left:37px;top:703.22px;width:955px;height:1px;background:#e3e3e3;"></div>
<div class="abs" style="left:40.5px;top:671.24px;width:6.8px;height:29.4px;background:#7cfa00;"></div>
<div class="t r" style="left:66.40px;top:674.16px;font-size:8.6px;color:#1e1e1e;letter-spacing:-0.153px;">Created</div>
<div class="t" style="left:66.40px;top:687.14px;font-size:9.1px;font-weight:700;color:#1e1e1e;letter-spacing:0.044px;transform:scaleX(0.9);transform-origin:0 0;">8/19/2024 7:49:17.354 PM</div>
<div class="abs" style="left:213.9px;top:678.44px;width:102.8px;height:13.9px;background:#c9c9c9;"></div>
<div class="t r" style="left:215.70px;top:682.06px;font-size:8.6px;letter-spacing:-0.000px;">File knowledge</div>
<svg class="abs" style="left:324px;top:678.74px" width="12" height="14" viewBox="0 0 12 14"><path d="M0.6 0.6H8L11.4 4V13.4H0.6Z" fill="#fff" stroke="#9a9a9a" stroke-width="0.9"/><path d="M8 0.6V4H11.4" fill="none" stroke="#9a9a9a" stroke-width="0.9"/></svg>
<div class="t r" style="left:346.50px;top:674.16px;font-size:8.6px;color:#1e1e1e;letter-spacing:-0.123px;">File system</div>
<div class="t" style="left:346.50px;top:687.14px;font-size:9.1px;font-weight:700;color:#1e1e1e;letter-spacing:-0.287px;transform:scaleX(0.9);transform-origin:0 0;">File</div>
<div class="t r" style="left:472.10px;top:674.16px;font-size:8.6px;color:#1e1e1e;letter-spacing:-0.229px;">Name</div>
<div class="t" style="left:472.10px;top:687.14px;font-size:9.1px;font-weight:700;color:#1e1e1e;letter-spacing:-0.174px;transform:scaleX(0.9);transform-origin:0 0;">f01b4d95cf55d32a.automaticDestinations-ms</div>
<div class="t r" style="left:688.30px;top:674.16px;font-size:8.6px;color:#1e1e1e;letter-spacing:-0.117px;">File extension</div>
<div class="t" style="left:688.30px;top:687.14px;font-size:9.1px;font-weight:700;color:#1e1e1e;letter-spacing:-0.249px;transform:scaleX(0.9);transform-origin:0 0;">.automaticDestinations-ms</div>
<div class="t r" style="width:87.7px;overflow:hidden;left:904.30px;top:674.16px;font-size:8.6px;color:#1e1e1e;letter-spacing:-0.116px;">Logical size</div>
<div class="t" style="width:97.4px;overflow:hidden;left:904.30px;top:687.14px;font-size:9.1px;font-weight:700;color:#1e1e1e;letter-spacing:0.106px;transform:scaleX(0.9);transform-origin:0 0;">9,216</div>
<div class="abs" style="left:37px;top:739.0px;width:955px;height:1px;background:#e3e3e3;"></div>
<div class="abs" style="left:40.5px;top:707.02px;width:6.8px;height:29.4px;background:#7cfa00;"></div>
<div class="t r" style="left:66.40px;top:709.94px;font-size:8.6px;color:#1e1e1e;letter-spacing:-0.113px;">Accessed Date/Time</div>
<div class="t" style="left:66.40px;top:722.92px;font-size:9.1px;font-weight:700;color:#1e1e1e;letter-spacing:0.044px;transform:scaleX(0.9);transform-origin:0 0;">8/19/2024 7:49:17.354 PM</div>
<div class="abs" style="left:213.9px;top:714.22px;width:102.8px;height:13.9px;background:#a9d595;"></div>
<div class="t r" style="left:215.70px;top:717.84px;font-size:8.6px;">File/folder opening</div>
<svg class="abs" style="left:324px;top:716.32px" width="11.2" height="11.2" viewBox="0 0 11.2 11.2"><path d="M0 0.5H4L5 1.6H11.2V11.2H0Z" fill="#f4cf9a"/><rect x="1" y="3" width="9" height="4" fill="#f9e2bf"/><path d="M1.2 11V8.5Q1.2 7.5 2.5 7.5H8.7Q10 7.5 10 8.5V11H8.5V9H2.7V11Z" fill="#3d8fe0"/></svg>
<div class="t r" style="left:346.50px;top:709.94px;font-size:8.6px;color:#1e1e1e;letter-spacing:-0.125px;">Refined Results</div>
<div class="t" style="left:346.50px;top:722.92px;font-size:9.1px;font-weight:700;color:#1e1e1e;letter-spacing:-0.306px;transform:scaleX(0.9);transform-origin:0 0;">Folder</div>
<div class="t r" style="left:472.10px;top:709.94px;font-size:8.6px;color:#1e1e1e;letter-spacing:-0.177px;">Path</div>
<div class="t" style="left:472.10px;top:722.92px;font-size:9.1px;font-weight:700;color:#1e1e1e;letter-spacing:-0.235px;transform:scaleX(0.9);transform-origin:0 0;">C:\Users</div>
<div class="t r" style="left:688.30px;top:709.94px;font-size:8.6px;color:#1e1e1e;letter-spacing:-0.059px;">Path Type</div>
<div class="t" style="left:688.30px;top:722.92px;font-size:9.1px;font-weight:700;color:#1e1e1e;letter-spacing:-0.306px;transform:scaleX(0.9);transform-origin:0 0;">Folder</div>
<div class="abs" style="left:992px;top:359px;width:12px;height:23px;background:#fff;"></div>
<div class="abs" style="left:992px;top:382px;width:12.2px;height:337px;background:#efefef;"></div>
<div class="abs" style="left:992px;top:434.1px;width:12.2px;height:14.8px;background:#cdcdcd;"></div>
<svg class="abs" style="left:995px;top:385px" width="7" height="5" viewBox="0 0 7 5"><path d="M0.5 4L3.5 1L6.5 4" fill="none" stroke="#a0a0a0" stroke-width="1"/></svg>
<svg class="abs" style="left:995px;top:710px" width="7" height="5" viewBox="0 0 7 5"><path d="M0.5 1L3.5 4L6.5 1" fill="none" stroke="#a0a0a0" stroke-width="1"/></svg>
<div class="abs" style="left:37px;top:719px;width:955px;height:8px;background:#efefef;"></div>
<div class="abs" style="left:49px;top:719px;width:899px;height:8px;background:#cdcdcd;"></div>
<svg class="abs" style="left:41px;top:722px" width="4" height="5" viewBox="0 0 4 5"><path d="M3.5 0.5L1 2.5L3.5 4.5" fill="none" stroke="#888" stroke-width="0.8"/></svg>
<svg class="abs" style="left:985px;top:722px" width="4" height="5" viewBox="0 0 4 5"><path d="M0.5 0.5L3 2.5L0.5 4.5" fill="none" stroke="#888" stroke-width="0.8"/></svg>
<div class="abs" style="left:992px;top:719px;width:12.2px;height:8px;background:#fff;"></div>
<div class="abs" style="left:35.6px;top:331px;width:1.1px;height:396px;background:#d8e2ec;"></div>
<div class="abs" style="left:1004.5px;top:127px;width:1.2px;height:600px;background:#d8e2ec;"></div>

</div></div>
</body></html>
